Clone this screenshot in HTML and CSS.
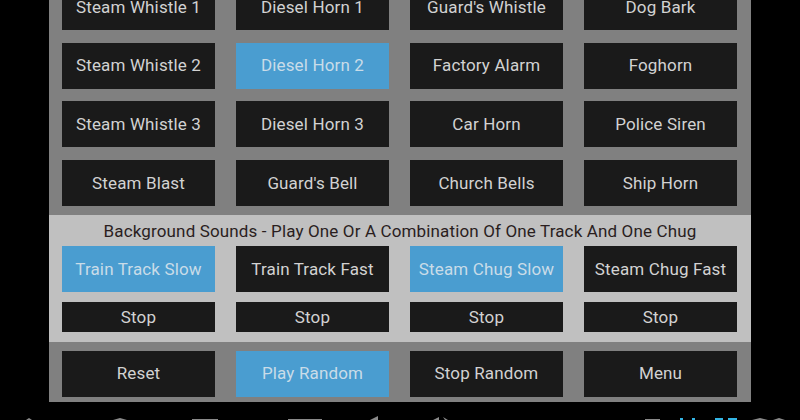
FILE: index.html
```html
<!DOCTYPE html>
<html lang="en">
<head>
<meta charset="utf-8">
<title>Train Sounds</title>
<link rel="stylesheet" href="styles.css">
</head>
<body>
<main class="panel">
  <section class="grid sounds">
    <div class="btn">Steam Whistle 1</div><div class="btn">Diesel Horn 1</div><div class="btn">Guard's Whistle</div><div class="btn">Dog Bark</div>
    <div class="btn raised">Steam Whistle 2</div><div class="btn raised on">Diesel Horn 2</div><div class="btn raised">Factory Alarm</div><div class="btn raised">Foghorn</div>
    <div class="btn">Steam Whistle 3</div><div class="btn">Diesel Horn 3</div><div class="btn">Car Horn</div><div class="btn">Police Siren</div>
    <div class="btn">Steam Blast</div><div class="btn">Guard's Bell</div><div class="btn">Church Bells</div><div class="btn">Ship Horn</div>
  </section>
  <section class="background">
    <h2 class="title">Background Sounds - Play One Or A Combination Of One Track And One Chug</h2>
    <div class="grid tracks">
      <div class="btn on">Train Track Slow</div><div class="btn">Train Track Fast</div><div class="btn on">Steam Chug Slow</div><div class="btn">Steam Chug Fast</div>
      <div class="btn stop">Stop</div><div class="btn stop">Stop</div><div class="btn stop">Stop</div><div class="btn stop">Stop</div>
    </div>
  </section>
  <section class="grid controls">
    <div class="btn raised">Reset</div><div class="btn raised on">Play Random</div><div class="btn raised">Stop Random</div><div class="btn raised">Menu</div>
  </section>
</main>
<footer class="nav">
  <svg class="nav-icons" width="800" height="18" viewBox="0 0 800 18" aria-hidden="true">
    <path class="grey" d="M29 16l3 2h-6zM113 18l7-2 7 2zM192 17h26v1h-26zM288 17h34v1h-34zM370 18l8-4v4zM433 18l6-3v3zM443 15l5 3h-3z"/>
    <path class="grey" d="M645 17h15v1h-15zM752 18l8-2 8 2zM773 18l6-2 6 2z"/>
    <path class="blue" d="M680 16h3v2h-3zM692 16h3v2h-3zM715 16h8v2h-8zM728 16h9v2h-9z"/>
  </svg>
</footer>
</body>
</html>
```
FILE: styles.css
```css
html, body {
  margin: 0;
  height: 420px;
  overflow: hidden;
  background: #000;
}
body {
  font-family: Roboto, "Liberation Sans", sans-serif;
}
.panel {
  width: 702px;
  height: 418px;
  margin: -16px 0 0 49px;
  background: #808080;
  box-sizing: border-box;
}
.grid {
  display: grid;
  grid-template-columns: repeat(4, 153px);
  column-gap: 21px;
  padding: 0 13px;
}
.sounds {
  grid-auto-rows: 46px;
  row-gap: 12.67px;
  height: 222px;
  padding-bottom: 9px;
}
.btn {
  display: flex;
  align-items: center;
  justify-content: center;
  background: #1a1a1a;
  color: #d2d2d2;
  font-size: 17px;
  letter-spacing: 0.14px;
}
.btn.raised {
  padding-bottom: 2px;
}
.btn.on {
  background: #4a9dd0;
  color: #c9dce8;
}
.background {
  height: 127px;
  background: #c0c0c0;
}
.title {
  margin: 0;
  height: 31px;
  line-height: 33px;
  text-align: center;
  font-size: 17px;
  font-weight: 400;
  letter-spacing: 0.14px;
  color: #2a1e1e;
}
.tracks {
  grid-template-rows: 46px 30px;
  row-gap: 10px;
}
.controls {
  grid-auto-rows: 46px;
  padding-top: 9px;
}
.nav {
  height: 18px;
}
.nav-icons {
  display: block;
}
.grey { fill: #8a8a8a; }
.blue { fill: #33b5e5; }
```
